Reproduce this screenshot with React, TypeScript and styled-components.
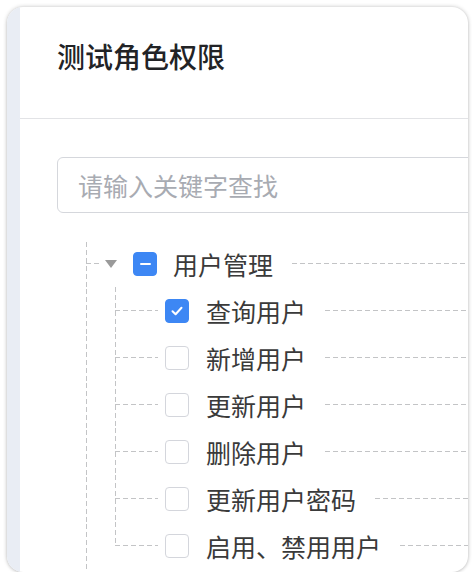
import React from 'react';
import styled, { createGlobalStyle, css } from 'styled-components';

const GlobalStyle = createGlobalStyle`
	html, body {
		margin: 0;
		padding: 0;
		background: #ffffff;
	}

	body {
		font-family: "Noto Sans CJK SC", "Noto Sans", sans-serif;
	}
`;

const lineColor = '#c3c4c6';
const hDash = `repeating-linear-gradient(to right, ${lineColor} 0 5px, transparent 5px 8px)`;
const vDash = `repeating-linear-gradient(to bottom, ${lineColor} 0 5px, transparent 5px 8px)`;

interface TreeItem {
	title: string;
	checked?: boolean;
}

const root = { title: '用户管理' };

const children: TreeItem[] = [
	{ title: '查询用户', checked: true },
	{ title: '新增用户' },
	{ title: '更新用户' },
	{ title: '删除用户' },
	{ title: '更新用户密码' },
	{ title: '启用、禁用用户' },
];

const Page = styled.div`
	padding: 7px 6px 0 7px;
`;

const Card = styled.div`
	display: flex;
	height: 565px;
	border-radius: 16px;
	overflow: hidden;
	background: #ffffff;
	box-shadow: 0 0 4px rgba(0, 0, 0, 0.22), 0 1px 3px rgba(0, 0, 0, 0.1);
`;

const Strip = styled.div`
	flex: 0 0 13px;
	background: #e9edf4;
`;

const Panel = styled.div`
	flex: 1;
	min-width: 0;
	overflow: hidden;
	display: flex;
	flex-direction: column;
`;

const Header = styled.div`
	padding: 32px 0 45px 37px;
	border-bottom: 1px solid #e2e3e6;
`;

const Title = styled.h2`
	margin: 0;
	font-size: 28px;
	line-height: 34px;
	font-weight: 500;
	color: #222326;
`;

const Body = styled.div`
	padding: 38px 0 0 37px;
`;

const SearchInput = styled.input`
	box-sizing: border-box;
	display: block;
	width: calc(100% + 60px);
	height: 56px;
	padding: 0 20px;
	border: 1px solid #d5d7dc;
	border-radius: 6px;
	outline: none;
	font-family: inherit;
	font-size: 25px;
	color: #333333;
	background: #ffffff;

	&::placeholder {
		color: #a8abb2;
	}
`;

const Tree = styled.div`
	margin: 27px 0 0 15px;
`;

const Row = styled.div`
	display: flex;
	align-items: center;
	height: 47px;
`;

const Guide = styled.span<{ $branch?: boolean }>`
	flex: 0 0 29px;
	align-self: stretch;
	background-repeat: no-repeat;
	background-image: ${vDash}${({ $branch }) => ($branch ? `, ${hDash}` : '')};
	background-size: 1px 100%${({ $branch }) => ($branch ? ', 14px 1px' : '')};
	background-position: 14px 2px${({ $branch }) => ($branch ? ', 14px 23px' : '')};
`;

const Connector = styled.span<{ $last?: boolean }>`
	flex: 0 0 57px;
	align-self: stretch;
	background-repeat: no-repeat;
	background-image: ${vDash}, ${hDash};
	background-size: 1px ${({ $last }) => ($last ? '24px' : '100%')}, 43px 1px;
	background-position: 14px 0, 14px 23px;
`;

const Switcher = styled.span`
	flex: 0 0 20px;
	display: flex;
	align-items: center;
	justify-content: center;
	margin-right: 12px;

	&::before {
		content: '';
		width: 0;
		height: 0;
		border-left: 6px solid transparent;
		border-right: 6px solid transparent;
		border-top: 8px solid #9a9a9a;
	}
`;

const Box = styled.span<{ $on?: boolean; $gap?: number }>`
	box-sizing: border-box;
	flex: 0 0 24px;
	height: 24px;
	margin-left: ${({ $gap }) => $gap ?? 0}px;
	display: flex;
	align-items: center;
	justify-content: center;
	border-radius: 4px;
	${({ $on }) =>
		$on
			? css`
					background: #3d87f4;
					border: 1px solid #3d87f4;
			  `
			: css`
					background: #ffffff;
					border: 1.5px solid #d4d6dc;
			  `}
`;

const Dash = styled.span`
	width: 11px;
	height: 2px;
	border-radius: 1px;
	background: #ffffff;
`;

const Label = styled.span<{ $gap: number }>`
	margin-left: ${({ $gap }) => $gap}px;
	font-size: 25px;
	line-height: 34px;
	color: #3a3a3a;
	white-space: nowrap;
`;

const Trail = styled.span`
	flex: 1;
	height: 1px;
	margin-left: 19px;
	background: ${hDash};
`;

const Check = () => (
	<svg width="14" height="14" viewBox="0 0 14 14" fill="none">
		<path d="M2.5 7.2 L5.6 10.2 L11.5 3.8" stroke="#ffffff" strokeWidth="2" strokeLinecap="round" strokeLinejoin="round" />
	</svg>
);

export default function App() {
	return (
		<>
			<GlobalStyle />
			<Page>
				<Card>
					<Strip />
					<Panel>
						<Header>
							<Title>测试角色权限</Title>
						</Header>
						<Body>
							<SearchInput placeholder="请输入关键字查找" />
							<Tree>
								<Row>
									<Guide $branch />
									<Switcher />
									<Box $on>
										<Dash />
									</Box>
									<Label $gap={16}>{root.title}</Label>
									<Trail />
								</Row>
								{children.map((item, i) => (
									<Row key={item.title}>
										<Guide />
										<Connector $last={i === children.length - 1} />
										<Box $on={item.checked} $gap={7}>
											{item.checked && <Check />}
										</Box>
										<Label $gap={17}>{item.title}</Label>
										<Trail />
									</Row>
								))}
							</Tree>
						</Body>
					</Panel>
				</Card>
			</Page>
		</>
	);
}
